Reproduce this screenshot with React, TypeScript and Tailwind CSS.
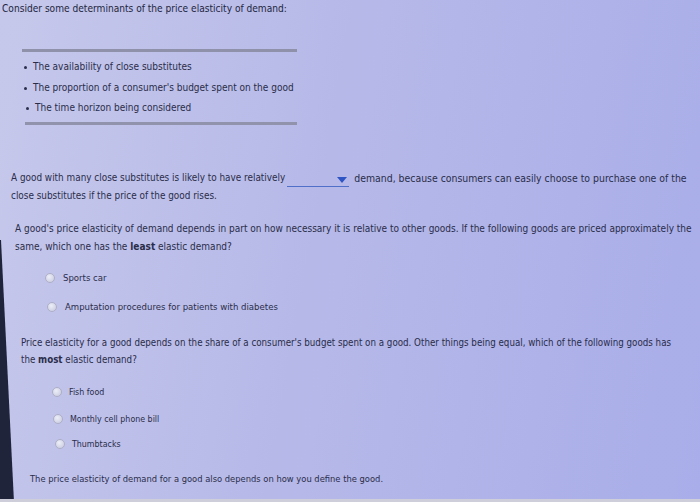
import React from "react";

const Radio = () => (
  <span className="inline-block w-[10px] h-[10px] rounded-full border border-[#aeb0c8] bg-[radial-gradient(circle_at_40%_35%,#eceef8,#c6c8dd)] shrink-0" />
);

const Bullet = () => <span className="w-[3px] h-[3px] rounded-full bg-[#2b2e4c] shrink-0" />;

export default function App() {
  return (
    <div
      className="relative w-[700px] h-[502px] overflow-hidden bg-[linear-gradient(100deg,#c6c8eb_0%,#b6b9e8_45%,#a9ade9_100%)] text-[#2a2d4a]"
      style={{ fontFamily: '"DejaVu Sans Condensed", "DejaVu Sans", Verdana, sans-serif' }}
    >
      <div className="flex flex-col">
        <div className="pl-[2px] pt-[3px] text-[10.1px] leading-[12px] text-[#23263f]">
          Consider some determinants of the price elasticity of demand:
        </div>

        <div className="ml-[22px] mt-[34px] w-[275px] h-[3px] bg-[#8f91ab]" />
        <ul className="ml-[24px] mt-[9px] flex flex-col text-[10px] leading-[12px]">
          <li className="flex items-center gap-[6px]"><Bullet />The availability of close substitutes</li>
          <li className="flex items-center gap-[6px] mt-[9px]"><Bullet />The proportion of a consumer's budget spent on the good</li>
          <li className="flex items-center gap-[6px] mt-[8px] ml-[2px]"><Bullet />The time horizon being considered</li>
        </ul>
        <div className="ml-[25px] mt-[8px] w-[272px] h-[3px] bg-[#9193ad]" />

        <div className="ml-[11px] mt-[44px] text-[9.9px] leading-[18px] w-[689px]">
          <div className="flex items-start h-[18px]">
            <span className="whitespace-nowrap">A good with many close substitutes is likely to have relatively</span>
            <span className="ml-[2px] mr-[5px] mt-[5px] w-[62px] h-[13px] border-b border-[#4f6fc9] flex justify-end items-center pr-[2px] shrink-0">
              <svg width="10" height="6" viewBox="0 0 10 6"><path d="M0 0 L10 0 L5 6 Z" fill="#2f55c4" /></svg>
            </span>
            <span className="text-[10.4px] whitespace-nowrap">demand, because consumers can easily choose to purchase one of the</span>
          </div>
          <div>close substitutes if the price of the good rises.</div>
        </div>

        <div className="ml-[15px] mt-[15px] text-[10px] leading-[18px] w-[685px]">
          <div className="whitespace-nowrap">A good's price elasticity of demand depends in part on how necessary it is relative to other goods. If the following goods are priced approximately the</div>
          <div>same, which one has the <b>least</b> elastic demand?</div>
        </div>

        <div className="ml-[45px] mt-[16px] flex items-center gap-[8px] text-[9.5px] leading-[12px]">
          <Radio /><span>Sports car</span>
        </div>
        <div className="ml-[47px] mt-[17px] flex items-center gap-[8px] text-[9.5px] leading-[12px]">
          <Radio /><span>Amputation procedures for patients with diabetes</span>
        </div>

        <div className="ml-[21px] mt-[21px] text-[9.7px] leading-[17px] w-[679px]">
          <div className="whitespace-nowrap">Price elasticity for a good depends on the share of a consumer's budget spent on a good. Other things being equal, which of the following goods has</div>
          <div>the <b>most</b> elastic demand?</div>
        </div>

        <div className="ml-[52px] mt-[18px] flex items-center gap-[7px] text-[8.8px] leading-[12px]">
          <Radio /><span>Fish food</span>
        </div>
        <div className="ml-[53px] mt-[15px] flex items-center gap-[7px] text-[8.8px] leading-[12px]">
          <Radio /><span>Monthly cell phone bill</span>
        </div>
        <div className="ml-[55px] mt-[13px] flex items-center gap-[7px] text-[8.8px] leading-[12px]">
          <Radio /><span>Thumbtacks</span>
        </div>

        <div className="ml-[30px] mt-[23px] text-[9.3px] leading-[12px] whitespace-nowrap">
          The price elasticity of demand for a good also depends on how you define the good.
        </div>
      </div>

      <svg className="absolute left-0 top-0" width="700" height="502" viewBox="0 0 700 502">
        <polygon points="0,240 1,240 14,502 0,502" fill="#20243a" />
        <rect x="0" y="499" width="700" height="3" fill="#cdced9" />
      </svg>
    </div>
  );
}
